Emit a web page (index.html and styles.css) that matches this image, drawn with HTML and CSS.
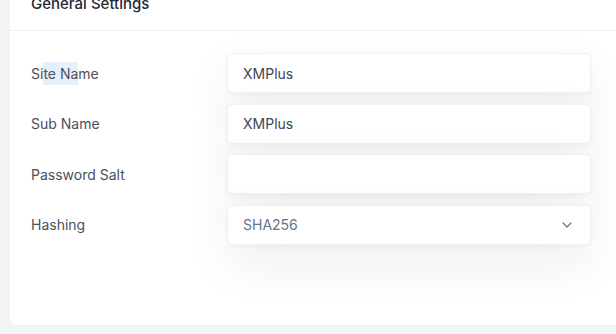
FILE: index.html
```html
<!DOCTYPE html>
<html lang="en">
  <head>
    <meta charset="UTF-8" />
    <meta name="viewport" content="width=device-width, initial-scale=1.0" />
    <title>General Settings</title>
    <link rel="stylesheet" href="styles.css">
  </head>
  <body>
    <div class="card">
      <div class="card-header">General Settings</div>

      <div class="card-body">
        <div class="row">
          <label class="label">Si<span class="sel">te Na</span>me</label>
          <div class="field">XMPlus</div>
        </div>

        <div class="row">
          <label class="label">Sub Name</label>
          <div class="field">XMPlus</div>
        </div>

        <div class="row">
          <label class="label">Password Salt</label>
          <div class="field"></div>
        </div>

        <div class="row">
          <label class="label">Hashing</label>
          <div class="field select">
            <span>SHA256</span>
            <svg width="10" height="6" viewBox="0 0 10 6">
              <path d="M1 1l4 4 4-4" fill="none" stroke="#64748b" stroke-width="1.2" stroke-linecap="round" stroke-linejoin="round" />
            </svg>
          </div>
        </div>
      </div>
    </div>
  </body>
</html>
```

FILE: styles.css
```css
body {
  font-family: Inter, "Noto Sans", sans-serif;
  background-color: #f3f4f6;
  color: #374151;
  margin: 0;
  padding: 0 0 0 10px;
  overflow: hidden;
  height: 334px;
}

.card {
  width: 640px;
  margin-top: -16px;
  background-color: #fff;
  border-radius: 6px;
  box-shadow: 0 0 3px rgba(0, 0, 0, 0.03);
}

.card-header {
  height: 36px;
  padding: 10px 21px 0;
  font-size: 15px;
  font-weight: 500;
  line-height: 20px;
  color: #1f2937;
  border-bottom: 1px solid #eceff5;
}

.card-body {
  display: flex;
  flex-direction: column;
  gap: 10.67px;
  padding: 22px 21px 80px;
}

.row {
  display: grid;
  grid-template-columns: 196px 364px;
  align-items: center;
}

.label {
  font-size: 14px;
  color: #4a505c;
}

.sel {
  background-color: #e8effc;
  padding: 3px 0;
}

.field {
  box-sizing: border-box;
  height: 40px;
  padding: 0 15px;
  display: flex;
  align-items: center;
  justify-content: space-between;
  font-size: 14px;
  color: #3f4552;
  background-color: #fff;
  border: 1px solid #eef0f4;
  border-radius: 5px;
  box-shadow: 0 18px 48px rgba(15, 23, 42, 0.08), 0 2px 4px rgba(15, 23, 42, 0.03);
}

.select {
  color: #64748b;
  padding-right: 18px;
}
```
